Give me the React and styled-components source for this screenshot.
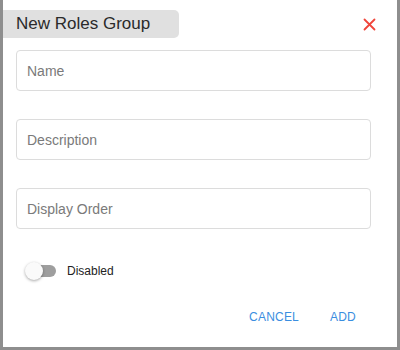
import React, { useState } from 'react';
import styled, { createGlobalStyle } from 'styled-components';

const GlobalStyle = createGlobalStyle`
  html, body {
    margin: 0;
    padding: 0;
    background: #8e8e8e;
    font-family: "Liberation Sans", Arial, sans-serif;
  }
`;

const NewRolesGroup = () => {
  const [formData, setFormData] = useState({
    name: '',
    description: '',
    displayOrder: '',
  });
  const [enabled, setEnabled] = useState(false);

  const handleChange = (e) => {
    setFormData({ ...formData, [e.target.name]: e.target.value });
  };

  return (
    <>
      <GlobalStyle />
      <Dialog>
        <Header>
          <TitleChip>New Roles Group</TitleChip>
          <CloseButton aria-label="close">
            <svg width="13" height="13" viewBox="0 0 13 13">
              <path d="M1.5 1.5 L11.5 11.5 M11.5 1.5 L1.5 11.5" stroke="#f0453a" strokeWidth="1.8" strokeLinecap="round" />
            </svg>
          </CloseButton>
        </Header>
        <Form onSubmit={(e) => e.preventDefault()}>
          <Input name="name" placeholder="Name" value={formData.name} onChange={handleChange} />
          <Input name="description" placeholder="Description" value={formData.description} onChange={handleChange} />
          <Input name="displayOrder" placeholder="Display Order" value={formData.displayOrder} onChange={handleChange} />
          <ToggleRow>
            <Switch type="button" $on={enabled} onClick={() => setEnabled(!enabled)}>
              <Track $on={enabled} />
              <Knob $on={enabled} />
            </Switch>
            <ToggleLabel>{enabled ? 'Enabled' : 'Disabled'}</ToggleLabel>
          </ToggleRow>
          <Actions>
            <TextButton type="button">CANCEL</TextButton>
            <TextButton type="submit">ADD</TextButton>
          </Actions>
        </Form>
      </Dialog>
    </>
  );
};

const Dialog = styled.div`
  margin: 0 3px 0 3px;
  height: 347px;
  background: #fff;
  display: flex;
  flex-direction: column;
  padding-top: 10px;
  box-sizing: border-box;
`;

const Header = styled.div`
  display: flex;
  align-items: center;
  justify-content: space-between;
  padding-right: 21px;
`;

const TitleChip = styled.div`
  width: 176px;
  height: 28px;
  box-sizing: border-box;
  padding-left: 13px;
  display: flex;
  align-items: center;
  background: #e0e0e0;
  border-radius: 0 5px 5px 0;
  color: #2a2a2a;
  font-size: 17px;
`;

const CloseButton = styled.button`
  border: none;
  background: none;
  padding: 0;
  width: 13px;
  height: 13px;
  display: flex;
  cursor: pointer;
`;

const Form = styled.form`
  display: flex;
  flex-direction: column;
  padding: 12px 26px 0 13px;
  gap: 28px;
`;

const Input = styled.input`
  height: 41px;
  box-sizing: border-box;
  border: 1px solid #dcdcdc;
  border-radius: 4px;
  padding: 0 10px;
  font-family: "Liberation Sans", Arial, sans-serif;
  font-size: 14px;
  color: #333;
  outline: none;
  &::placeholder {
    color: #7a7a7a;
  }
`;

const ToggleRow = styled.div`
  display: flex;
  align-items: center;
  gap: 11px;
  padding-left: 9px;
  margin-top: 5px;
`;

const Switch = styled.button`
  position: relative;
  width: 31px;
  height: 18px;
  border: none;
  background: none;
  padding: 0;
  cursor: pointer;
`;

const Track = styled.span`
  position: absolute;
  left: 2px;
  right: 0;
  top: 3px;
  height: 12px;
  border-radius: 6px;
  background: ${(p) => (p.$on ? '#90caf9' : '#9e9e9e')};
`;

const Knob = styled.span`
  position: absolute;
  top: 0;
  left: ${(p) => (p.$on ? '13px' : '0')};
  width: 18px;
  height: 18px;
  border-radius: 50%;
  background: ${(p) => (p.$on ? '#2196f3' : '#fafafa')};
  box-shadow: 0 1px 3px rgba(0, 0, 0, 0.35);
`;

const ToggleLabel = styled.span`
  font-size: 12px;
  color: #222;
`;

const Actions = styled.div`
  display: flex;
  justify-content: flex-end;
  gap: 7px;
  margin-top: -4px;
  margin-right: 3px;
`;

const TextButton = styled.button`
  border: none;
  background: none;
  padding: 6px 12px;
  min-width: 50px;
  font-family: "Liberation Sans", Arial, sans-serif;
  font-size: 12px;
  color: #3a8ee0;
  cursor: pointer;
  letter-spacing: 0.2px;
`;

export default NewRolesGroup;
